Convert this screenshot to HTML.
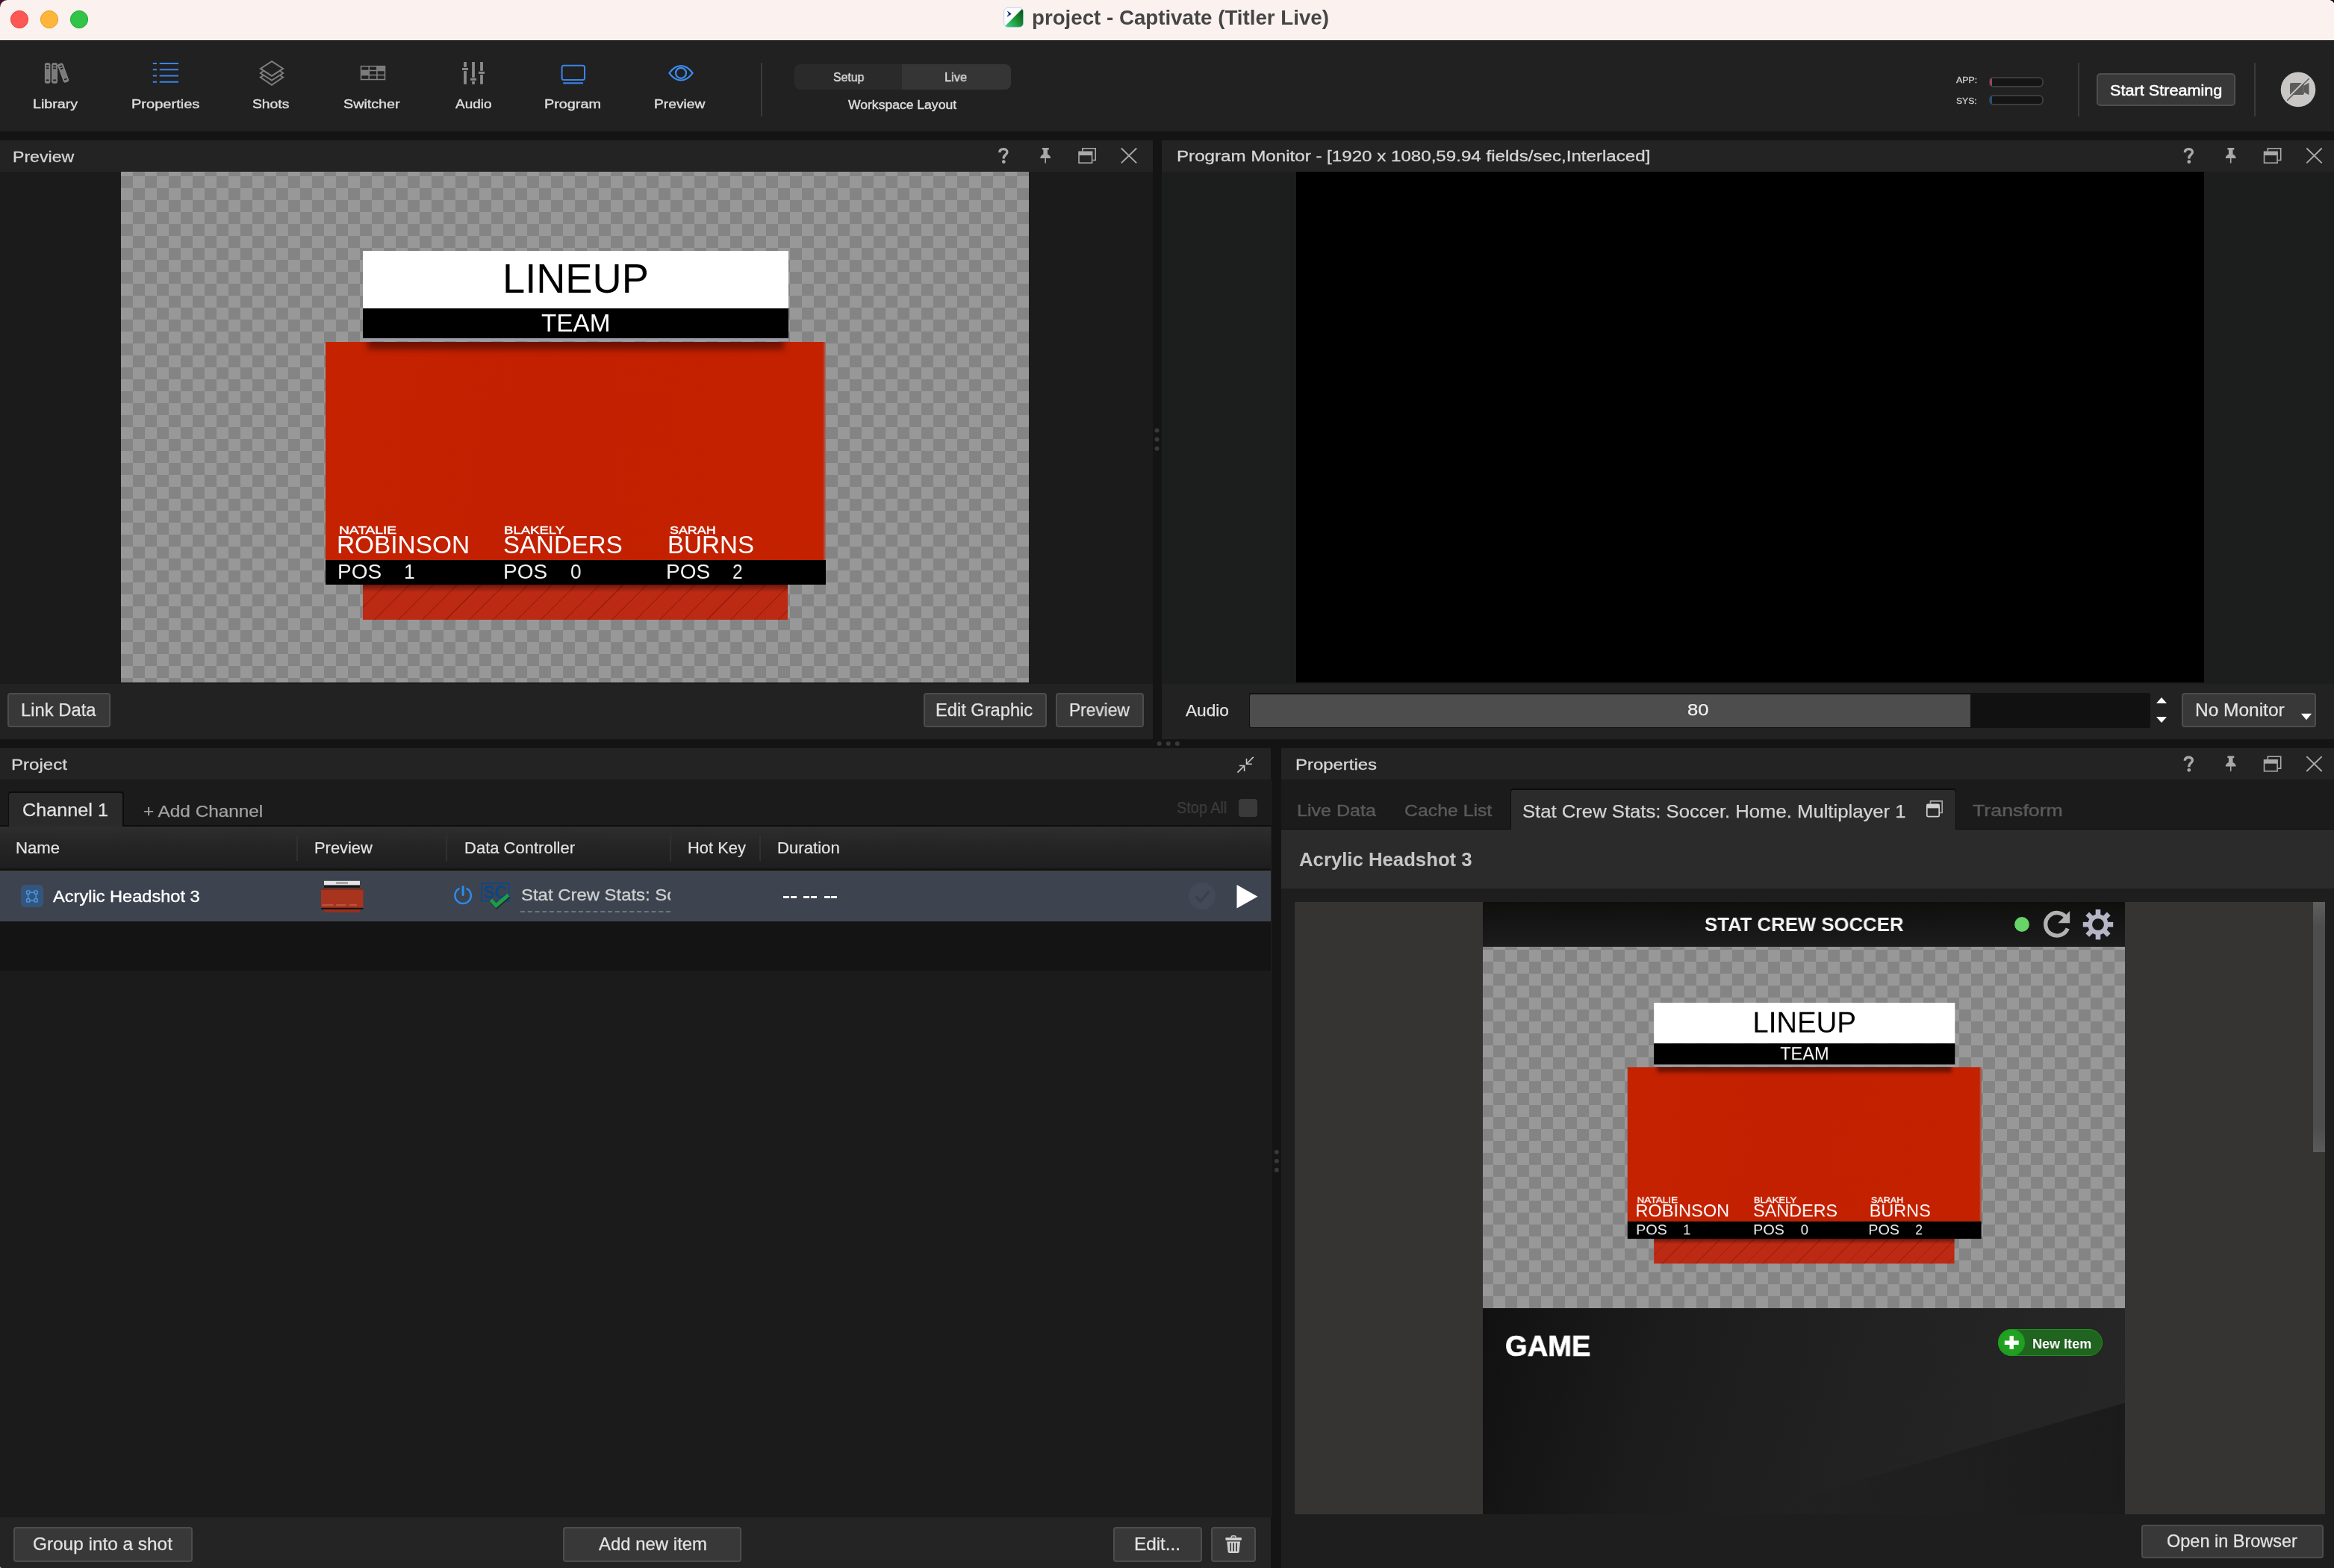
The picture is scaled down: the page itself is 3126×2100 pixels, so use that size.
<!DOCTYPE html><html><head><meta charset="utf-8"><title>Captivate</title><style>html,body{margin:0;padding:0}body{width:3126px;height:2100px;background:#141414;position:relative;overflow:hidden;font-family:"Liberation Sans",sans-serif}div,span,svg{position:absolute}span{white-space:nowrap;display:block;will-change:transform}</style></head><body>
<div style="left:0px;top:0px;width:3126px;height:54px;background:#fbf2ef;"></div>
<div style="left:0px;top:54px;width:3126px;height:1px;background:#000;"></div>
<div style="left:0px;top:55px;width:3126px;height:121px;background:#212121;"></div>
<span style="left:1381.89px;top:11.16px;font-size:26.75px;line-height:26.75px;color:#454545;font-weight:bold;transform-origin:0 22.64px;transform:scale(1.0349,1);">project - Captivate (Titler Live)</span>
<span style="left:43.73px;top:131.40px;font-size:17.25px;line-height:17.25px;color:#dedede;-webkit-text-stroke:0.4px #dedede;transform-origin:0 14.60px;transform:scale(1.1406,1);">Library</span>
<span style="left:175.60px;top:131.40px;font-size:17.25px;line-height:17.25px;color:#dedede;-webkit-text-stroke:0.4px #dedede;transform-origin:0 14.60px;transform:scale(1.1615,1);">Properties</span>
<span style="left:338.36px;top:131.40px;font-size:17.25px;line-height:17.25px;color:#dedede;-webkit-text-stroke:0.4px #dedede;transform-origin:0 14.60px;transform:scale(1.1181,1);">Shots</span>
<span style="left:460.44px;top:131.40px;font-size:17.25px;line-height:17.25px;color:#dedede;-webkit-text-stroke:0.4px #dedede;transform-origin:0 14.60px;transform:scale(1.1424,1);">Switcher</span>
<span style="left:609.50px;top:131.40px;font-size:17.25px;line-height:17.25px;color:#dedede;-webkit-text-stroke:0.4px #dedede;transform-origin:0 14.60px;transform:scale(1.1020,1);">Audio</span>
<span style="left:729.12px;top:131.40px;font-size:17.25px;line-height:17.25px;color:#dedede;-webkit-text-stroke:0.4px #dedede;transform-origin:0 14.60px;transform:scale(1.1473,1);">Program</span>
<span style="left:875.87px;top:131.40px;font-size:17.25px;line-height:17.25px;color:#dedede;-webkit-text-stroke:0.4px #dedede;transform-origin:0 14.60px;transform:scale(1.1133,1);">Preview</span>
<div style="left:1019px;top:84px;width:2px;height:72px;background:#3a3a3a;"></div>
<div style="left:1064px;top:86px;width:290px;height:34px;background:#2a2a2a;border-radius:8px;"></div>
<div style="left:1208px;top:86px;width:146px;height:34px;background:#353535;border-radius:0 8px 8px 0;"></div>
<span style="left:1115.99px;top:95.82px;font-size:16.75px;line-height:16.75px;color:#dedede;-webkit-text-stroke:0.4px #dedede;transform-origin:0 14.18px;transform:scale(0.9440,1);">Setup</span>
<span style="left:1265.36px;top:95.82px;font-size:16.75px;line-height:16.75px;color:#dedede;-webkit-text-stroke:0.4px #dedede;transform-origin:0 14.18px;transform:scale(0.9782,1);">Live</span>
<span style="left:1136.26px;top:133.46px;font-size:16px;line-height:16px;color:#dedede;-webkit-text-stroke:0.4px #dedede;transform-origin:0 13.54px;transform:scale(1.0970,1);">Workspace Layout</span>
<span style="left:2619.70px;top:101.05px;font-size:11.75px;line-height:11.75px;color:#cfcfcf;-webkit-text-stroke:0.3px #cfcfcf;transform-origin:0 9.95px;transform:scale(1.0485,1);">APP:</span>
<span style="left:2620.19px;top:129.05px;font-size:11.75px;line-height:11.75px;color:#cfcfcf;-webkit-text-stroke:0.3px #cfcfcf;transform-origin:0 9.95px;transform:scale(1.0297,1);">SYS:</span>
<div style="left:2663.5px;top:103px;width:73.5px;height:13.5px;background:#151515;border:2px solid #3d3d3d;border-radius:6px;box-sizing:border-box;overflow:hidden;"></div>
<div style="left:2664.6px;top:104.8px;width:3.4px;height:9.9px;background:#98445a;border-radius:4px 0 0 4px;"></div>
<div style="left:2663.5px;top:127px;width:73.5px;height:13.5px;background:#151515;border:2px solid #3d3d3d;border-radius:6px;box-sizing:border-box;"></div>
<div style="left:2664.6px;top:128.8px;width:3.4px;height:9.9px;background:#25507a;border-radius:4px 0 0 4px;"></div>
<div style="left:2783px;top:84px;width:2px;height:72px;background:#3a3a3a;"></div>
<div style="left:2808px;top:98px;width:186px;height:44px;background:#383838;border:2px solid #4e4e4e;border-radius:5px;box-sizing:border-box;"></div>
<span style="left:2825.66px;top:110.94px;font-size:20.75px;line-height:20.75px;color:#fff;-webkit-text-stroke:0.5px #fff;transform-origin:0 17.56px;transform:scale(1.0432,1);">Start Streaming</span>
<div style="left:3019px;top:84px;width:2px;height:72px;background:#3a3a3a;"></div>
<div style="left:0px;top:188px;width:1544px;height:42px;background:#232323;"></div>
<div style="left:0px;top:230px;width:1544px;height:686px;background:#1b1b1b;"></div>
<div style="left:0px;top:916px;width:1544px;height:74px;background:#222222;"></div>
<span style="left:17.37px;top:199.85px;font-size:20.5px;line-height:20.5px;color:#d6d6d6;-webkit-text-stroke:0.3px #d6d6d6;transform-origin:0 17.35px;transform:scale(1.1278,1);">Preview</span>
<div style="left:1556px;top:188px;width:1570px;height:42px;background:#232323;"></div>
<div style="left:1556px;top:230px;width:1570px;height:686px;background:#1c1d1d;"></div>
<div style="left:1736px;top:230px;width:1216px;height:684px;background:#000;"></div>
<div style="left:1556px;top:916px;width:1570px;height:74px;background:#222222;"></div>
<span style="left:1576.09px;top:199.25px;font-size:20.5px;line-height:20.5px;color:#d6d6d6;-webkit-text-stroke:0.3px #d6d6d6;transform-origin:0 17.35px;transform:scale(1.1770,1);">Program Monitor - [1920 x 1080,59.94 fields/sec,Interlaced]</span>
<div style="left:10px;top:928px;width:138px;height:45.5px;background:#383838;border:2px solid #4d4d4d;border-radius:4px;box-sizing:border-box;"></div>
<span style="left:27.76px;top:939.73px;font-size:23px;line-height:23px;color:#e2e2e2;-webkit-text-stroke:0.25px #e2e2e2;transform-origin:0 19.47px;transform:scale(1.0341,1);">Link Data</span>
<div style="left:1236.5px;top:928px;width:165.5px;height:45.5px;background:#383838;border:2px solid #4d4d4d;border-radius:4px;box-sizing:border-box;"></div>
<span style="left:1253.27px;top:939.73px;font-size:23px;line-height:23px;color:#e2e2e2;-webkit-text-stroke:0.25px #e2e2e2;transform-origin:0 19.47px;transform:scale(1.0282,1);">Edit Graphic</span>
<div style="left:1414.4px;top:928px;width:117.2px;height:45.5px;background:#383838;border:2px solid #4d4d4d;border-radius:4px;box-sizing:border-box;"></div>
<span style="left:1431.85px;top:939.73px;font-size:23px;line-height:23px;color:#e2e2e2;-webkit-text-stroke:0.25px #e2e2e2;transform-origin:0 19.47px;transform:scale(0.9875,1);">Preview</span>
<span style="left:1587.70px;top:940.65px;font-size:22.5px;line-height:22.5px;color:#e2e2e2;-webkit-text-stroke:0.25px #e2e2e2;transform-origin:0 19.05px;transform:scale(1.0066,1);">Audio</span>
<div style="left:1672.5px;top:928.3px;width:1207.5px;height:47.1px;background:#111;border-radius:3px;"></div>
<div style="left:1674px;top:930px;width:964.5px;height:44px;background:#4d4d4d;border-radius:2px 0 0 2px;"></div>
<span style="left:2259.66px;top:941.40px;font-size:21.5px;line-height:21.5px;color:#f0f0f0;-webkit-text-stroke:0.25px #f0f0f0;transform-origin:0 18.20px;transform:scale(1.1910,1);">80</span>
<div style="left:2922.2px;top:928.3px;width:180px;height:45.7px;background:#383838;border:2px solid #4d4d4d;border-radius:4px;box-sizing:border-box;"></div>
<span style="left:2939.71px;top:939.63px;font-size:23px;line-height:23px;color:#e2e2e2;-webkit-text-stroke:0.25px #e2e2e2;transform-origin:0 19.47px;transform:scale(1.0639,1);">No Monitor</span>
<div style="left:0px;top:1002px;width:1702px;height:42px;background:#232323;"></div>
<div style="left:0px;top:1044px;width:1704.3px;height:61px;background:#1b1b1b;"></div>
<span style="left:15.49px;top:1013.85px;font-size:20.5px;line-height:20.5px;color:#d6d6d6;-webkit-text-stroke:0.3px #d6d6d6;transform-origin:0 17.35px;transform:scale(1.1742,1);">Project</span>
<div style="left:10.5px;top:1060px;width:155px;height:46px;background:#0d0d0d;border-radius:4px 4px 0 0;"></div>
<div style="left:12px;top:1061.5px;width:152px;height:45.5px;background:#2a2a2a;border-radius:3px 3px 0 0;"></div>
<div style="left:0px;top:1105px;width:12px;height:2px;background:#0d0d0d;"></div>
<div style="left:164px;top:1105px;width:1538px;height:2px;background:#0d0d0d;"></div>
<span style="left:30.40px;top:1073.37px;font-size:24.25px;line-height:24.25px;color:#e4e4e4;-webkit-text-stroke:0.25px #e4e4e4;transform-origin:0 20.53px;transform:scale(1.0393,1);">Channel 1</span>
<span style="left:192.48px;top:1075.75px;font-size:22.5px;line-height:22.5px;color:#a2a2a2;-webkit-text-stroke:0.25px #a2a2a2;transform-origin:0 19.05px;transform:scale(1.0809,1);">+ Add Channel</span>
<span style="left:1575.77px;top:1072.01px;font-size:21.25px;line-height:21.25px;color:#3e3e3e;-webkit-text-stroke:0.25px #3e3e3e;transform-origin:0 17.99px;transform:scale(0.9336,1);">Stop All</span>
<div style="left:1659px;top:1069.5px;width:25px;height:24.5px;background:#3a3a3a;border-radius:4px;"></div>
<div style="left:0px;top:1107px;width:1702px;height:56px;background:linear-gradient(#2e2e2e,#252525 45%,#1e1e1e);"></div>
<div style="left:0px;top:1163px;width:1702px;height:3px;background:#14140f;"></div>
<div style="left:397px;top:1118px;width:2px;height:34.5px;background:#303030;"></div>
<div style="left:597px;top:1118px;width:2px;height:34.5px;background:#303030;"></div>
<div style="left:897px;top:1118px;width:2px;height:34.5px;background:#303030;"></div>
<div style="left:1017px;top:1118px;width:2px;height:34.5px;background:#303030;"></div>
<span style="left:21.32px;top:1125.19px;font-size:21.75px;line-height:21.75px;color:#e2e2e2;-webkit-text-stroke:0.2px #e2e2e2;transform-origin:0 18.41px;transform:scale(1.0190,1);">Name</span>
<span style="left:421.34px;top:1125.19px;font-size:21.75px;line-height:21.75px;color:#e2e2e2;-webkit-text-stroke:0.2px #e2e2e2;transform-origin:0 18.41px;transform:scale(1.0063,1);">Preview</span>
<span style="left:621.53px;top:1125.19px;font-size:21.75px;line-height:21.75px;color:#e2e2e2;-webkit-text-stroke:0.2px #e2e2e2;transform-origin:0 18.41px;transform:scale(1.0116,1);">Data Controller</span>
<span style="left:921.34px;top:1125.19px;font-size:21.75px;line-height:21.75px;color:#e2e2e2;-webkit-text-stroke:0.2px #e2e2e2;transform-origin:0 18.41px;transform:scale(1.0063,1);">Hot Key</span>
<span style="left:1041.32px;top:1125.19px;font-size:21.75px;line-height:21.75px;color:#e2e2e2;-webkit-text-stroke:0.2px #e2e2e2;transform-origin:0 18.41px;transform:scale(1.0186,1);">Duration</span>
<div style="left:0px;top:1166px;width:1702px;height:68px;background:#3d4450;"></div>
<div style="left:0px;top:1234px;width:1702px;height:66px;background:#141414;"></div>
<div style="left:1702px;top:1107px;width:2.3px;height:193px;background:#1b1b1b;"></div>
<div style="left:0px;top:1300px;width:1704.3px;height:731.5px;background:#1b1b1b;"></div>
<div style="left:0px;top:2031.5px;width:1702px;height:68.5px;background:#242424;"></div>
<div style="left:28.2px;top:1184.7px;width:29.7px;height:30.5px;background:#34567a;border-radius:6px;"></div>
<span style="left:71.40px;top:1190.38px;font-size:22px;line-height:22px;color:#fff;-webkit-text-stroke:0.35px #fff;transform-origin:0 18.62px;transform:scale(1.0723,1);">Acrylic Headshot 3</span>
<div style="left:690px;top:1170px;width:208px;height:60px;overflow:hidden;background:none">
<span style="left:8.11px;top:17.88px;font-size:22px;line-height:22px;color:#d0d0d0;-webkit-text-stroke:0.3px #d0d0d0;transform-origin:0 18.62px;transform:scale(1.0865,1);">Stat Crew Stats: Soccer</span>
</div>
<div style="left:697px;top:1219.5px;width:201px;height:1.5px;background:none;border-top:2px dashed #6c737d;box-sizing:border-box;"></div>
<div style="left:1049px;top:1200px;width:8px;height:2.7px;background:#fff;"></div>
<div style="left:1058.5px;top:1200px;width:8px;height:2.7px;background:#fff;"></div>
<div style="left:1076px;top:1200px;width:8px;height:2.7px;background:#fff;"></div>
<div style="left:1085.5px;top:1200px;width:8px;height:2.7px;background:#fff;"></div>
<div style="left:1103.5px;top:1200px;width:8px;height:2.7px;background:#fff;"></div>
<div style="left:1113px;top:1200px;width:8px;height:2.7px;background:#fff;"></div>
<div style="left:18px;top:2044.5px;width:240px;height:47px;background:#383838;border:2px solid #4d4d4d;border-radius:4px;box-sizing:border-box;"></div>
<span style="left:44.02px;top:2056.92px;font-size:23.25px;line-height:23.25px;color:#e2e2e2;-webkit-text-stroke:0.25px #e2e2e2;transform-origin:0 19.68px;transform:scale(1.0480,1);">Group into a shot</span>
<div style="left:754px;top:2044.5px;width:239.4px;height:47px;background:#383838;border:2px solid #4d4d4d;border-radius:4px;box-sizing:border-box;"></div>
<span style="left:801.70px;top:2056.92px;font-size:23.25px;line-height:23.25px;color:#e2e2e2;-webkit-text-stroke:0.25px #e2e2e2;transform-origin:0 19.68px;transform:scale(1.0296,1);">Add new item</span>
<div style="left:1490.5px;top:2044.5px;width:119.5px;height:47px;background:#383838;border:2px solid #4d4d4d;border-radius:4px;box-sizing:border-box;"></div>
<span style="left:1518.74px;top:2056.92px;font-size:23.25px;line-height:23.25px;color:#e2e2e2;-webkit-text-stroke:0.25px #e2e2e2;transform-origin:0 19.68px;transform:scale(1.0450,1);">Edit...</span>
<div style="left:1622px;top:2044.5px;width:60px;height:47px;background:#383838;border:2px solid #4d4d4d;border-radius:4px;box-sizing:border-box;"></div>
<div style="left:1716px;top:1002px;width:1410px;height:42px;background:#232323;"></div>
<div style="left:1716px;top:1044px;width:1410px;height:67px;background:#1b1b1b;"></div>
<div style="left:1716px;top:1111px;width:1410px;height:989px;background:#1e1e1e;"></div>
<span style="left:1735.30px;top:1013.85px;font-size:20.5px;line-height:20.5px;color:#d6d6d6;-webkit-text-stroke:0.3px #d6d6d6;transform-origin:0 17.35px;transform:scale(1.1670,1);">Properties</span>
<div style="left:1716px;top:1109.5px;width:1410px;height:1.5px;background:#0d0d0d;"></div>
<div style="left:2022.5px;top:1056px;width:597.5px;height:55px;background:#0d0d0d;border-radius:4px 4px 0 0;"></div>
<div style="left:2024px;top:1057.5px;width:594.5px;height:53.5px;background:#2b2b2b;border-radius:3px 3px 0 0;"></div>
<div style="left:1716px;top:1111px;width:1410px;height:79px;background:#2b2b2b;"></div>
<div style="left:1716px;top:1190px;width:1410px;height:18px;background:#1e1e1e;"></div>
<span style="left:1737.01px;top:1074.55px;font-size:22.5px;line-height:22.5px;color:#5a5a5a;-webkit-text-stroke:0.45px #5a5a5a;transform-origin:0 19.05px;transform:scale(1.1146,1);">Live Data</span>
<span style="left:1880.86px;top:1074.55px;font-size:22.5px;line-height:22.5px;color:#5a5a5a;-webkit-text-stroke:0.45px #5a5a5a;transform-origin:0 19.05px;transform:scale(1.1029,1);">Cache List</span>
<span style="left:2039.31px;top:1075.17px;font-size:24.25px;line-height:24.25px;color:#d4d4d4;-webkit-text-stroke:0.25px #d4d4d4;transform-origin:0 20.53px;transform:scale(1.0584,1);">Stat Crew Stats: Soccer. Home. Multiplayer 1</span>
<span style="left:2641.51px;top:1075.15px;font-size:22.5px;line-height:22.5px;color:#5a5a5a;-webkit-text-stroke:0.45px #5a5a5a;transform-origin:0 19.05px;transform:scale(1.1890,1);">Transform</span>
<span style="left:1740.06px;top:1138.54px;font-size:25px;line-height:25px;color:#c6c6c6;font-weight:bold;transform-origin:0 21.16px;transform:scale(1.0291,1);">Acrylic Headshot 3</span>
<div style="left:1734px;top:1208px;width:1380px;height:820px;background:#353433;"></div>
<div style="left:3098px;top:1208px;width:16px;height:335px;background:linear-gradient(#5f5f5f,#4d4d4d 10%,#4d4d4d 90%,#5a5a5a);"></div>
<div style="left:1986px;top:1208px;width:860px;height:60px;background:linear-gradient(#0f0f0d,#141414 40%,#1c1c1c);"></div>
<span style="left:2282.77px;top:1225.47px;font-size:26.5px;line-height:26.5px;color:#f4f4f4;font-weight:bold;transform-origin:0 22.43px;transform:scale(0.9714,1);">STAT CREW SOCCER</span>
<div style="left:2868.4px;top:2042.4px;width:243.2px;height:45px;background:#383838;border:2px solid #4d4d4d;border-radius:4px;box-sizing:border-box;"></div>
<span style="left:2902.16px;top:2053.12px;font-size:23.25px;line-height:23.25px;color:#e2e2e2;-webkit-text-stroke:0.25px #e2e2e2;transform-origin:0 19.68px;transform:scale(1.0103,1);">Open in Browser</span>
<div style="left:162px;top:230px;width:1216px;height:684px;overflow:hidden;background:#8e8e8e"><div style="left:-6px;top:-6px;width:1228px;height:696px;background:conic-gradient(#989898 25%,#848484 0 50%,#989898 0 75%,#848484 0);background-size:32px 32px;background-position:6px 12px;filter:blur(0.55px)"></div></div>
<div style="left:1986px;top:1268px;width:860px;height:484px;overflow:hidden;background:#8e8e8e"><div style="left:-6px;top:-6px;width:872px;height:496px;background:conic-gradient(#989898 25%,#848484 0 50%,#989898 0 75%,#848484 0);background-size:32px 32px;background-position:20px 10px;filter:blur(0.55px)"></div></div>
<div style="left:162px;top:230px;width:1216px;height:684px;transform-origin:0 0;transform:scale(1);background:none">
<div style="left:324px;top:553px;width:569px;height:46.5px;background:#bd2a13;background-image:repeating-linear-gradient(135deg,rgba(90,0,0,0) 0 21px,rgba(80,0,0,.26) 21px 22.5px);"></div>
<div style="left:324px;top:553px;width:569px;height:10px;background:linear-gradient(rgba(0,0,0,.45),rgba(0,0,0,0));"></div>
<div style="left:274px;top:228px;width:669.6px;height:292px;background:linear-gradient(100deg,#c52200,#c22000 40%,#c42100);overflow:hidden">
<div style="left:57px;top:-16px;width:556px;height:16px;background:#000;box-shadow:0 9px 8px 1px rgba(0,0,0,.44)"></div>
<div style="right:0;top:0;width:3.5px;height:292px;background:linear-gradient(90deg,rgba(142,142,142,0),rgba(142,142,142,.75))"></div>
</div>
<div style="left:324px;top:106px;width:570px;height:77px;background:#fff;"></div>
<div style="left:324px;top:183px;width:570px;height:39.5px;background:#000;"></div>
<div style="left:324px;top:222.5px;width:570px;height:4px;background:#9c9ca6;"></div>
<div style="left:274px;top:520px;width:669.6px;height:33px;background:#000;"></div>
<span style="left:510.81px;top:116.29px;font-size:54px;line-height:54px;color:#000;transform-origin:0 45.71px;transform:scale(1.0040,1.03898);">LINEUP</span>
<span style="left:562.53px;top:186.69px;font-size:32.5px;line-height:32.5px;color:#fff;transform-origin:0 27.51px;transform:scale(1.0245,1.04651);">TEAM</span>
<span style="left:291.86px;top:473.15px;font-size:14px;line-height:14px;color:#fff;-webkit-text-stroke:0.4px #fff;transform-origin:0 11.85px;transform:scale(1.3693,1.11088);">NATALIE</span>
<span style="left:289.36px;top:484.41px;font-size:32px;line-height:32px;color:#fff;transform-origin:0 27.09px;transform:scale(1.0429,1.04924);">ROBINSON</span>
<span style="left:290.46px;top:522.57px;font-size:26.5px;line-height:26.5px;color:#f2f2f2;transform-origin:0 22.43px;transform:scale(1.0546,1.04212);">POS</span>
<span style="left:512.51px;top:473.15px;font-size:14px;line-height:14px;color:#fff;-webkit-text-stroke:0.4px #fff;transform-origin:0 11.85px;transform:scale(1.3255,1.11088);">BLAKELY</span>
<span style="left:512.45px;top:484.41px;font-size:32px;line-height:32px;color:#fff;transform-origin:0 27.09px;transform:scale(1.0326,1.04924);">SANDERS</span>
<span style="left:512.26px;top:522.57px;font-size:26.5px;line-height:26.5px;color:#f2f2f2;transform-origin:0 22.43px;transform:scale(1.0546,1.04212);">POS</span>
<span style="left:734.80px;top:473.15px;font-size:14px;line-height:14px;color:#fff;-webkit-text-stroke:0.4px #fff;transform-origin:0 11.85px;transform:scale(1.2774,1.11088);">SARAH</span>
<span style="left:732.38px;top:484.41px;font-size:32px;line-height:32px;color:#fff;transform-origin:0 27.09px;transform:scale(1.0364,1.04924);">BURNS</span>
<span style="left:730.26px;top:522.57px;font-size:26.5px;line-height:26.5px;color:#f2f2f2;transform-origin:0 22.43px;transform:scale(1.0546,1.04212);">POS</span>
<span style="left:378.70px;top:522.57px;font-size:26.5px;line-height:26.5px;color:#f2f2f2;transform-origin:0 22.43px;transform:scale(1.0000,1.04212);">1</span>
<span style="left:602.22px;top:522.57px;font-size:26.5px;line-height:26.5px;color:#f2f2f2;transform-origin:0 22.43px;transform:scale(0.9804,1.04212);">0</span>
<span style="left:819.13px;top:522.57px;font-size:26.5px;line-height:26.5px;color:#f2f2f2;transform-origin:0 22.43px;transform:scale(0.9250,1.04212);">2</span>
</div>
<div style="left:1986px;top:1268px;width:1216px;height:684px;transform-origin:0 0;transform:scale(0.7072368421052632);background:none">
<div style="left:324px;top:553px;width:569px;height:46.5px;background:#bd2a13;background-image:repeating-linear-gradient(135deg,rgba(90,0,0,0) 0 21px,rgba(80,0,0,.26) 21px 22.5px);"></div>
<div style="left:324px;top:553px;width:569px;height:10px;background:linear-gradient(rgba(0,0,0,.45),rgba(0,0,0,0));"></div>
<div style="left:274px;top:228px;width:669.6px;height:292px;background:linear-gradient(100deg,#c52200,#c22000 40%,#c42100);overflow:hidden">
<div style="left:57px;top:-16px;width:556px;height:16px;background:#000;box-shadow:0 9px 8px 1px rgba(0,0,0,.44)"></div>
<div style="right:0;top:0;width:3.5px;height:292px;background:linear-gradient(90deg,rgba(142,142,142,0),rgba(142,142,142,.75))"></div>
</div>
<div style="left:324px;top:106px;width:570px;height:77px;background:#fff;"></div>
<div style="left:324px;top:183px;width:570px;height:39.5px;background:#000;"></div>
<div style="left:324px;top:222.5px;width:570px;height:4px;background:#9c9ca6;"></div>
<div style="left:274px;top:520px;width:669.6px;height:33px;background:#000;"></div>
<span style="left:510.81px;top:116.29px;font-size:54px;line-height:54px;color:#000;transform-origin:0 45.71px;transform:scale(1.0040,1.03898);">LINEUP</span>
<span style="left:562.53px;top:186.69px;font-size:32.5px;line-height:32.5px;color:#fff;transform-origin:0 27.51px;transform:scale(1.0245,1.04651);">TEAM</span>
<span style="left:291.86px;top:473.15px;font-size:14px;line-height:14px;color:#fff;-webkit-text-stroke:0.4px #fff;transform-origin:0 11.85px;transform:scale(1.3693,1.11088);">NATALIE</span>
<span style="left:289.36px;top:484.41px;font-size:32px;line-height:32px;color:#fff;transform-origin:0 27.09px;transform:scale(1.0429,1.04924);">ROBINSON</span>
<span style="left:290.46px;top:522.57px;font-size:26.5px;line-height:26.5px;color:#f2f2f2;transform-origin:0 22.43px;transform:scale(1.0546,1.04212);">POS</span>
<span style="left:512.51px;top:473.15px;font-size:14px;line-height:14px;color:#fff;-webkit-text-stroke:0.4px #fff;transform-origin:0 11.85px;transform:scale(1.3255,1.11088);">BLAKELY</span>
<span style="left:512.45px;top:484.41px;font-size:32px;line-height:32px;color:#fff;transform-origin:0 27.09px;transform:scale(1.0326,1.04924);">SANDERS</span>
<span style="left:512.26px;top:522.57px;font-size:26.5px;line-height:26.5px;color:#f2f2f2;transform-origin:0 22.43px;transform:scale(1.0546,1.04212);">POS</span>
<span style="left:734.80px;top:473.15px;font-size:14px;line-height:14px;color:#fff;-webkit-text-stroke:0.4px #fff;transform-origin:0 11.85px;transform:scale(1.2774,1.11088);">SARAH</span>
<span style="left:732.38px;top:484.41px;font-size:32px;line-height:32px;color:#fff;transform-origin:0 27.09px;transform:scale(1.0364,1.04924);">BURNS</span>
<span style="left:730.26px;top:522.57px;font-size:26.5px;line-height:26.5px;color:#f2f2f2;transform-origin:0 22.43px;transform:scale(1.0546,1.04212);">POS</span>
<span style="left:378.70px;top:522.57px;font-size:26.5px;line-height:26.5px;color:#f2f2f2;transform-origin:0 22.43px;transform:scale(1.0000,1.04212);">1</span>
<span style="left:602.22px;top:522.57px;font-size:26.5px;line-height:26.5px;color:#f2f2f2;transform-origin:0 22.43px;transform:scale(0.9804,1.04212);">0</span>
<span style="left:819.13px;top:522.57px;font-size:26.5px;line-height:26.5px;color:#f2f2f2;transform-origin:0 22.43px;transform:scale(0.9250,1.04212);">2</span>
</div>
<div style="left:1986px;top:1752px;width:860px;height:276px;background:linear-gradient(105deg,#111 0%,#1c1c1c 28%,#222 60%,#272727 100%);overflow:hidden">
<div style="left:0;top:0;width:860px;height:276px;background:linear-gradient(90deg,rgba(0,0,0,0) 48%,rgba(0,0,0,.31) 100%);clip-path:polygon(860px 126.7px,860px 276px,350px 276px);"></div>
</div>
<span style="left:2015.90px;top:1783.50px;font-size:38.75px;line-height:38.75px;color:#fff;font-weight:bold;-webkit-text-stroke:0.7px #fff;transform-origin:0 32.80px;transform:scale(0.9830,1);">GAME</span>
<div style="left:2676.2px;top:1779.8px;width:139.8px;height:36.2px;background:#1f651f;border-radius:18.2px;border:1.5px solid #21901f;box-sizing:border-box;"></div>
<div style="left:2676.2px;top:1779.8px;width:36px;height:36.2px;background:radial-gradient(circle at 50% 45%,#25a825,#1c981c);border-radius:18.2px;"></div>
<span style="left:2721.51px;top:1789.62px;font-size:19px;line-height:19px;color:#fff;font-weight:bold;transform-origin:0 16.08px;transform:scale(0.9506,1);text-shadow:0 0 2px rgba(0,40,0,.9);">New Item</span>
<svg width="3126" height="2100" viewBox="0 0 3126 2100" style="left:0;top:0">
<circle cx="26" cy="26" r="11.6" fill="#ff5752" stroke="#e0433e" stroke-width="1"/>
<circle cx="66" cy="26" r="11.6" fill="#feb53b" stroke="#dfa023" stroke-width="1"/>
<circle cx="106" cy="26" r="11.6" fill="#31c449" stroke="#1daa2c" stroke-width="1"/>
<path d="M0 0H10A10 10 0 0 0 0 10Z" fill="#4a0f2e"/>
<path d="M3126 0H3120.5Q3124.500 1 3126 4.200Z" fill="#0a0510"/>
<path d="M0 2100H3A3 3 0 0 1 0 2097Z" fill="#bbb"/>
<defs><linearGradient id="gi" x1="0" y1="1" x2="1" y2="0.3"><stop offset="0" stop-color="#45dc8e"/><stop offset="0.55" stop-color="#1f9a3c"/><stop offset="1" stop-color="#0a5a16"/></linearGradient>
<clipPath id="ci"><rect x="1344.6" y="10.3" width="26.1" height="26.1" rx="5.5"/></clipPath></defs>
<g clip-path="url(#ci)"><rect x="1344.6" y="10.3" width="26.1" height="26.1" fill="#fdfdfd"/>
<path d="M1344.6 36.4L1370.7 10.3V36.4Z" fill="url(#gi)"/>
<path d="M1348.8 14.2L1354.6 18.8L1349.2 22.6L1351 18.6Z" fill="#101848"/><path d="M1349.3 20.2L1352.3 18.9L1349.2 22.9Z" fill="#2a7ae0"/></g>
<rect x="1344.6" y="10.3" width="26.1" height="26.1" rx="5.5" fill="none" stroke="#a8c8f0" stroke-width="0.8"/>
<g ><rect x="60.4" y="84.8" width="6.5" height="26.4" rx="1.5" fill="#7b7b7b" stroke="#8f8f8f" stroke-width="0.9"/><rect x="61.75" y="87.3" width="3.8" height="1.700" rx="0.5" fill="#1f1f1f"/><rect x="61.75" y="90.6" width="3.8" height="1.700" rx="0.5" fill="#1f1f1f"/><rect x="61.75" y="106.6" width="3.8" height="1.700" rx="0.5" fill="#1f1f1f"/></g>
<g ><rect x="69.7" y="84.8" width="6.8" height="26.4" rx="1.5" fill="#7b7b7b" stroke="#8f8f8f" stroke-width="0.9"/><rect x="71.05" y="87.3" width="4.1" height="1.700" rx="0.5" fill="#1f1f1f"/><rect x="71.05" y="90.6" width="4.1" height="1.700" rx="0.5" fill="#1f1f1f"/><rect x="71.05" y="106.6" width="4.1" height="1.700" rx="0.5" fill="#1f1f1f"/></g>
<g transform="rotate(-20 84.750 97.600)"><rect x="81.45" y="84.9" width="6.6" height="25.4" rx="1.5" fill="#7b7b7b" stroke="#8f8f8f" stroke-width="0.9"/><rect x="82.8" y="87.4" width="3.8999999999999995" height="1.700" rx="0.5" fill="#1f1f1f"/><rect x="82.8" y="90.7" width="3.8999999999999995" height="1.700" rx="0.5" fill="#1f1f1f"/><rect x="82.8" y="105.70000000000002" width="3.8999999999999995" height="1.700" rx="0.5" fill="#1f1f1f"/></g>
<path d="M204.8 85h5.2M213.7 85h25.3" stroke="#3b84ea" stroke-width="2.1"/>
<path d="M204.8 93.2h5.2M213.7 93.2h25.3" stroke="#3b84ea" stroke-width="2.1"/>
<path d="M204.8 101.5h5.2M213.7 101.5h25.3" stroke="#3b84ea" stroke-width="2.1"/>
<path d="M204.8 109.8h5.2M213.7 109.8h25.3" stroke="#3b84ea" stroke-width="2.1"/>
<g fill="none" stroke="#7e7e7e" stroke-width="2" stroke-linejoin="miter"><path d="M364 82.1L379.1 91.9L364 101.700L348.9 91.9Z"/><path d="M352.700 95.3L348.9 98L364 107.600L379.1 98L375.300 95.3"/><path d="M352.700 101L348.9 103.600L364 113.800L379.1 103.600L375.300 101"/></g>
<g fill="none" stroke="#848484" stroke-width="1.5"><rect x="483.5" y="88.7" width="32" height="17.8"/><path d="M494.2 88.7v17.8M504.9 88.7v17.8M483.5 94.6h32M483.5 100.6h32"/></g><rect x="504.9" y="88.7" width="10.6" height="5.9" fill="#7b7b7b"/><rect x="483.5" y="94.6" width="10.7" height="6" fill="#7b7b7b"/>
<rect x="621.1" y="83" width="3.8" height="29.8" fill="#8a8a8a"/><rect x="618" y="89.9" width="10" height="5.2" fill="#212121"/><rect x="619" y="91.0" width="8" height="3" fill="#8a8a8a"/>
<rect x="632.1" y="83" width="3.8" height="29.8" fill="#8a8a8a"/><rect x="629" y="103.7" width="10" height="5.2" fill="#212121"/><rect x="630" y="104.8" width="8" height="3" fill="#8a8a8a"/>
<rect x="643.1" y="83" width="3.8" height="29.8" fill="#8a8a8a"/><rect x="640" y="94.80000000000001" width="10" height="5.2" fill="#212121"/><rect x="641" y="95.9" width="8" height="3" fill="#8a8a8a"/>
<rect x="752.6" y="87.8" width="30.4" height="19.3" rx="2.5" fill="none" stroke="#3b84ea" stroke-width="2"/><path d="M754.2 111.3h26.8" stroke="#3b84ea" stroke-width="2.1"/>
<g fill="none" stroke="#3d8cf0" stroke-width="2.2"><path d="M896.4 97.8C901 91.5 906.5 88.1 912 88.1S923 91.5 927.6 97.8C923 104.100 917.5 107.5 912 107.5S901 104.1 896.4 97.8Z"/><circle cx="912" cy="97.8" r="7"/></g>
<circle cx="3078" cy="119.9" r="23.3" fill="#c8c7c5"/><g fill="#5c5c5c"><rect x="3067" y="110.9" width="18.8" height="16.1" rx="1.8"/><path d="M3085.8 114.5L3091.5 111.3Q3092.5 110.9 3092.5 112V126Q3092.5 127.200 3091.5 126.700L3085.8 123.400Z"/></g><path d="M3091.2 104.4L3062.6 133" stroke="#c8c7c5" stroke-width="2.4"/><path d="M3092.3 105.5L3063.7 134.1" stroke="#5c5c5c" stroke-width="1.5" stroke-linecap="round"/>
<g transform="translate(0 0)"><path d="M1338.8 204.2C1338.9 200.900 1340.9 199.600 1343.9 199.600C1346.9 199.600 1348.9 201.200 1348.9 203.700C1348.9 207.300 1344.3 207.500 1344.3 211.300V212.600" fill="none" stroke="#a9a9a9" stroke-width="3.4"/><circle cx="1344.3" cy="216.700" r="2.4" fill="#a9a9a9"/><path d="M1395.9 197.9H1404.8V200.400H1403V206.500C1405.500 207.700 1407.2 209.500 1407.2 212H1401V218L1400.2 219L1399.400 218V212H1393.2C1393.200 209.500 1394.900 207.700 1397.400 206.500V200.400H1395.9Z" fill="#a9a9a9"/><g fill="none" stroke="#a9a9a9" stroke-width="1.6"><path d="M1449.8 202.500V198.700H1467.2V214.500H1463.400"/><rect x="1445" y="203.300" width="17.6" height="14.9"/></g><rect x="1445" y="203.300" width="17.6" height="4.8" fill="#a9a9a9"/><path d="M1501.8 198.500L1522.2 218.400M1522.2 198.500L1501.8 218.400" stroke="#a9a9a9" stroke-width="1.9"/></g>
<g transform="translate(1587.5 0)"><path d="M1338.8 204.2C1338.9 200.900 1340.9 199.600 1343.9 199.600C1346.9 199.600 1348.9 201.200 1348.9 203.700C1348.9 207.300 1344.3 207.500 1344.3 211.300V212.600" fill="none" stroke="#a9a9a9" stroke-width="3.4"/><circle cx="1344.3" cy="216.700" r="2.4" fill="#a9a9a9"/><path d="M1395.9 197.9H1404.8V200.400H1403V206.500C1405.500 207.700 1407.2 209.500 1407.2 212H1401V218L1400.2 219L1399.400 218V212H1393.2C1393.200 209.500 1394.900 207.700 1397.400 206.500V200.400H1395.9Z" fill="#a9a9a9"/><g fill="none" stroke="#a9a9a9" stroke-width="1.6"><path d="M1449.8 202.500V198.700H1467.2V214.500H1463.400"/><rect x="1445" y="203.300" width="17.6" height="14.9"/></g><rect x="1445" y="203.300" width="17.6" height="4.8" fill="#a9a9a9"/><path d="M1501.8 198.500L1522.2 218.400M1522.2 198.500L1501.8 218.400" stroke="#a9a9a9" stroke-width="1.9"/></g>
<g transform="translate(1587.5 814.6)"><path d="M1338.8 204.2C1338.9 200.900 1340.9 199.600 1343.9 199.600C1346.9 199.600 1348.9 201.200 1348.9 203.700C1348.9 207.300 1344.3 207.500 1344.3 211.300V212.600" fill="none" stroke="#a9a9a9" stroke-width="3.4"/><circle cx="1344.3" cy="216.700" r="2.4" fill="#a9a9a9"/><path d="M1395.9 197.9H1404.8V200.400H1403V206.500C1405.500 207.700 1407.2 209.500 1407.2 212H1401V218L1400.2 219L1399.400 218V212H1393.2C1393.200 209.500 1394.900 207.700 1397.400 206.500V200.400H1395.9Z" fill="#a9a9a9"/><g fill="none" stroke="#a9a9a9" stroke-width="1.6"><path d="M1449.8 202.500V198.700H1467.2V214.500H1463.400"/><rect x="1445" y="203.300" width="17.6" height="14.9"/></g><rect x="1445" y="203.300" width="17.6" height="4.8" fill="#a9a9a9"/><path d="M1501.8 198.500L1522.2 218.400M1522.2 198.500L1501.8 218.400" stroke="#a9a9a9" stroke-width="1.9"/></g>
<g fill="none" stroke="#c8c8c8" stroke-width="1.6"><path d="M1678.7 1013.9L1669.5 1023.3M1669.5 1016.1V1023.3H1676.8"/><path d="M1657.5 1034.6L1666.6 1025.5M1659.9 1025.5H1666.6V1032.9"/></g>
<circle cx="1549.5" cy="576.4" r="3" fill="#393939"/>
<circle cx="1549.5" cy="588.6" r="3" fill="#393939"/>
<circle cx="1549.5" cy="600.8" r="3" fill="#393939"/>
<circle cx="1709.900" cy="1543" r="3" fill="#393939"/>
<circle cx="1709.900" cy="1555" r="3" fill="#393939"/>
<circle cx="1709.900" cy="1567" r="3" fill="#393939"/>
<circle cx="1552.7" cy="996" r="3" fill="#393939"/>
<circle cx="1564.8" cy="996" r="3" fill="#393939"/>
<circle cx="1576.8" cy="996" r="3" fill="#393939"/>
<path d="M2888 942L2895 934L2902 942Z" fill="#fff"/><path d="M2888 960L2895 968L2902 960Z" fill="#fff"/><path d="M3082 955.700L3089 964.3L3096 955.700Z" fill="#fff"/>
<g fill="none" stroke="#4a92e6" stroke-width="1.5"><path d="M39.9 1195.2H45.9M39.9 1205.900H45.9M37.7 1197.400V1203.700M48.1 1197.400V1203.700"/><rect x="35.6" y="1193.1000000000001" width="4.2" height="4.2" rx="0.8"/><rect x="35.6" y="1203.8000000000002" width="4.2" height="4.2" rx="0.8"/><rect x="46.0" y="1193.1000000000001" width="4.2" height="4.2" rx="0.8"/><rect x="46.0" y="1203.8000000000002" width="4.2" height="4.2" rx="0.8"/></g>
<rect x="434" y="1179.800" width="48" height="5.8" fill="#e4e4e4"/><rect x="450" y="1181.200" width="16" height="2.6" fill="#a0a0a0"/><rect x="434" y="1185.600" width="48" height="3.2" fill="#141414"/><rect x="430" y="1190" width="56.400" height="25.8" fill="#a8341e"/><rect x="430" y="1190" width="56.400" height="1.600" fill="#7e2616"/><rect x="431.500" y="1211" width="15" height="2.2" fill="#b8523e"/><rect x="450" y="1211" width="13.500" height="2.2" fill="#b8523e"/><rect x="468" y="1211" width="10" height="2.2" fill="#b8523e"/><rect x="430" y="1215.800" width="56.400" height="2.100" fill="#1a1210"/><rect x="434" y="1218" width="48" height="3.800" fill="#9c2e1a"/>
<g fill="none" stroke="#2a8cf2" stroke-linecap="round"><path d="M614.6 1190.200A10.700 10.700 0 1 0 625.600 1190.200" stroke-width="2.5"/><path d="M620.1 1187.600V1198.600" stroke-width="3"/></g>
<rect x="645" y="1182.800" width="36.400" height="24.200" fill="none" stroke="#0a468a" stroke-width="1.6"/><text x="647.600" y="1203.400" font-family="Liberation Sans" font-weight="bold" font-size="23.500" fill="#0a468a" textLength="31.500" lengthAdjust="spacingAndGlyphs">SC</text><path d="M657.600 1205.400L664.400 1212.800L681 1198.600" fill="none" stroke="#1c2a30" stroke-width="5.500" transform="translate(0.8 1.200)"/><path d="M657.600 1205.400L664.400 1212.800L681 1198.600" fill="none" stroke="#1e9c44" stroke-width="5"/>
<circle cx="1610" cy="1200" r="18" fill="#434a57"/><path d="M1601.500 1200.500L1607.800 1207L1619.500 1193.500" fill="none" stroke="#3a414d" stroke-width="3.600"/>
<path d="M1656.500 1185L1684.500 1200.700L1656.500 1216.500Z" fill="#fff"/>
<g fill="#d0d0d0"><path d="M1648.500 2059.200V2058.200Q1648.500 2056.300 1650.400 2056.300H1653.900Q1655.800 2056.300 1655.800 2058.200V2059.200H1654.300V2058.500Q1654.300 2057.700 1653.500 2057.700H1650.800Q1650 2057.700 1650 2058.500V2059.200Z"/><rect x="1641.400" y="2059.200" width="21.500" height="3.700" rx="1"/><path d="M1643.300 2064.400H1661L1659.600 2078.200Q1659.400 2080 1657.600 2080H1646.700Q1644.900 2080 1644.700 2078.200Z"/></g><path d="M1648.200 2066.500V2077.500M1652.150 2066.500V2077.500M1656.100 2066.500V2077.500" stroke="#383838" stroke-width="1.700"/>
<g fill="none" stroke="#d0d0d0" stroke-width="1.700"><path d="M2585.500 1076.500V1072.800H2601.200V1088.500H2597.400" opacity=".75"/><rect x="2580.800" y="1077.400" width="16.400" height="16.200" rx="1.500"/></g><rect x="2580.800" y="1077.400" width="16.400" height="5" fill="#d0d0d0"/>
<circle cx="2708" cy="1238" r="9.900" fill="#66d466"/>
<path d="M2768.600 1230.800A15.300 15.300 0 1 0 2769.200 1243.500" fill="none" stroke="#b2b2b2" stroke-width="5.300"/><path d="M2772.200 1220V1236.300H2756.300Z" fill="#b2b2b2"/>
<g fill="#b5b5c7"><rect x="2806.7" y="1218.0" width="6.600" height="9" transform="rotate(0 2810 1238.2)"/><rect x="2806.7" y="1218.0" width="6.600" height="9" transform="rotate(45 2810 1238.2)"/><rect x="2806.7" y="1218.0" width="6.600" height="9" transform="rotate(90 2810 1238.2)"/><rect x="2806.7" y="1218.0" width="6.600" height="9" transform="rotate(135 2810 1238.2)"/><rect x="2806.7" y="1218.0" width="6.600" height="9" transform="rotate(180 2810 1238.2)"/><rect x="2806.7" y="1218.0" width="6.600" height="9" transform="rotate(225 2810 1238.2)"/><rect x="2806.7" y="1218.0" width="6.600" height="9" transform="rotate(270 2810 1238.2)"/><rect x="2806.7" y="1218.0" width="6.600" height="9" transform="rotate(315 2810 1238.2)"/></g><circle cx="2810" cy="1238.2" r="10.800" fill="none" stroke="#b5b5c7" stroke-width="5.800"/>
<path d="M2694.200 1789.300V1807.100M2684.800 1798.200H2703.700" stroke="#fff" stroke-width="5.400"/>
</svg>
</body></html>
